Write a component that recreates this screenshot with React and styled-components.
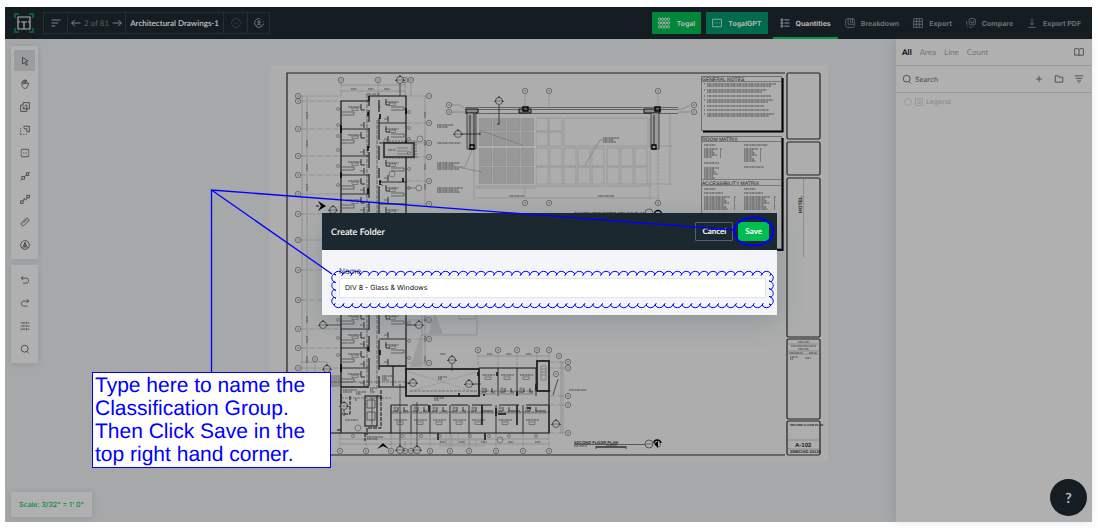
import React from "react";
import styled, { createGlobalStyle } from "styled-components";

/* ---------- icons ---------- */

const ICONS = {
	menu: <path d="M2 4h12M2 8h9M2 12h5" />,
	left: <path d="M15 8H1M6 3L1 8l5 5" />,
	right: <path d="M1 8h14M10 3l5 5-5 5" />,
	check: (
		<>
			<circle cx="8" cy="8" r="7" />
			<path d="M5 8l2 2 4-4" />
		</>
	),
	account: (
		<>
			<path d="M9 1a7 7 0 1 0 6 8" />
			<circle cx="8" cy="6.500" r="2" />
			<path d="M4.500 12c1-3 6-3 7 0M12 2l1 1M14 5l1 1" />
		</>
	),
	pattern: (
		<>
			{[3, 8, 13].map((y) =>
				[2, 6, 10, 14].map((x) => <circle key={`${x}-${y}`} cx={x} cy={y} r="1.600" />)
			)}
		</>
	),
	chat: (
		<>
			<path d="M1 2h14M15 2v12H1V2" />
			<path d="M4 8h1.500M7.500 8H9M11 8h1" />
		</>
	),
	list: (
		<>
			<circle cx="3" cy="3" r="1.700" />
			<circle cx="3" cy="8" r="1.700" />
			<circle cx="3" cy="13" r="1.700" />
			<path d="M7 3h8M7 8h8M7 13h8" />
		</>
	),
	breakdown: (
		<>
			<rect x="1" y="1" width="14" height="14" rx="3" />
			<path d="M5 1v9h10M9 1v6h3V1" />
		</>
	),
	table: <path d="M1 1h14v14H1zM1 5.500h14M1 10h14M5.500 1v14M10 1v14" />,
	compare: (
		<>
			<rect x="5" y="1" width="10" height="10" rx="2" />
			<path d="M8 4v4h4V4M1 5v6M2 14h2M6 15h3M11 14v-1" />
		</>
	),
	download: <path d="M8 1v10M5 8l3 3 3-3M2 15h12" />,
	pointer: <path d="M4 2l9 6-4 1 3 5-2 1-3-5-3 3z" />,
	hand: (
		<>
			<path d="M3 9V5c0-1 2-1 2 0V3c0-1 2-1 2 0V2c0-1 2-1 2 0v1c0-1 2-1 2 0v5l2-1c2 0 1 1 0 3l-2 4c-3 2-8 1-8-5z" />
			<path d="M5 5v4M7 3v5M9 3v5" />
		</>
	),
	duplicate: (
		<>
			<path d="M5 5V1h10v10h-4" />
			<path d="M5 5H1v10h10v-4M11 5v6H5M11 5H8M5 8v3M5 8h3" />
		</>
	),
	cutout: <path d="M6 4V2h9v9h-4V6H6M1 5v2M1 9v2M1 13v2h2M5 15h2M9 15h2" />,
	split: (
		<>
			<path d="M2 6V3l1-1h10l1 1v3M2 10v3l1 1h10l1-1v-3" />
			<path d="M1 8h2M5 8h2M9 8h2M13 8h2" />
		</>
	),
	line: (
		<>
			<rect x="3" y="9" width="4" height="4" />
			<rect x="10" y="3" width="4" height="4" />
			<path d="M7 9l3-2M1 15l2-2M14 3l2-2" />
		</>
	),
	polyline: (
		<>
			<rect x="1" y="11" width="4" height="4" />
			<rect x="11" y="2" width="4" height="4" />
			<path d="M5 11l2-4 2 3 3-4" />
		</>
	),
	ruler: <path d="M2 10l8-8c2-1 5 2 4 4l-8 8c-2 1-5-2-4-4zM5 10l6-6" />,
	auto: (
		<>
			<circle cx="8" cy="8" r="7" />
			<path d="M4 13l4-9 4 9M6 10h4M8 4v9" />
		</>
	),
	undo: <path d="M5 2L2 5l3 3M2 5h8c5 0 5 8 0 8H5" />,
	redo: <path d="M11 2l3 3-3 3M14 5H6c-5 0-5 8 0 8h6" />,
	sliders: <path d="M1 3h7M12 3h3M10 1v4M1 8h2M7 8h8M5 6v4M1 13h7M12 13h3M10 11v4" />,
	search: (
		<>
			<circle cx="7.500" cy="7.500" r="5.500" />
			<path d="M11 12l3 3" />
		</>
	),
	book: <path d="M8 4v10M8 4C6 2 3 2 1 3v10h14V3c-2-1-5-1-7 1z" />,
	plus: <path d="M8 3v10M3 8h10" />,
	folder: <path d="M2 3h5l1 2h6v8H2z" />,
	filter: <path d="M1 3h14M3 7h10M5 11h6M7 14h2" />,
	legend: (
		<>
			<rect x="1" y="1" width="14" height="14" rx="1" />
			<path d="M4 5h1M7 5h5M4 8h1M7 8h5M4 11h1M7 11h5" />
		</>
	),
};

function Icon({ name, size = 10 }) {
	return (
		<Glyph width={size} height={size} viewBox="0 0 16 16" aria-hidden="true">
			{ICONS[name]}
		</Glyph>
	);
}

function Logo() {
	return (
		<svg width="20" height="20" viewBox="0 0 20 20" fill="none" aria-hidden="true">
			<path d="M1 5V1h4M15 1h4v4M19 15v4h-4M5 19H1v-4" stroke="#08753f" strokeWidth="1.500" />
			<path d="M4 4h12v12H4zM4 9h2M14 9h2M7 9h6M10 9v7" stroke="#a9afb2" strokeWidth="1.200" />
		</svg>
	);
}

/* ---------- floor plan ---------- */

const BUBBLES = [
	...[341, 378, 405, 411].map((x) => [x, 80]),
	...[96, 101, 129, 156, 175, 194, 214, 240, 270, 300, 329, 348, 368].map((y) => [298, y]),
	...[96, 123, 143, 157, 181, 204, 320, 339, 363].map((y) => [429, y]),
	...[478, 498, 517, 537, 549].map((x) => [x, 350]),
	...[340, 366, 391, 405, 411, 430, 450, 469, 496, 523, 549].map((x) => [x, 451]),
	...[362, 368, 396, 405, 433].map((y) => [568, y]),
	...[525, 549, 658].flatMap((x) => [[x, 91], [x, 203]]),
	[449, 105], [449, 112], [694, 105], [694, 112], [315, 359], [559, 356], [556, 374],
];

const TAGS = [
	[400, 80], [499, 101], [458, 134], [323, 325], [419, 325], [452, 360], [413, 383],
	[469, 384], [400, 450], [417, 450], [327, 369], [344, 406], [556, 424], [333, 210],
];

// x, y, width, height, bathroom on the right
const ROOMS = [
	[341, 101, 28, 28, 1], [341, 129, 28, 27, 1], [341, 156, 28, 19, 1], [341, 175, 28, 19, 1],
	[341, 194, 28, 20, 1], [379, 96, 27, 27, 0], [379, 123, 27, 20, 0], [379, 157, 27, 25, 0],
	[379, 182, 27, 22, 0], [379, 204, 27, 20, 0], [341, 310, 28, 19, 1], [341, 329, 28, 19, 1],
	[341, 348, 28, 20, 1], [341, 368, 28, 19, 1], [379, 310, 27, 29, 0], [379, 339, 27, 27, 0],
];

const UPPER_WING = [479, 498, 517];
const LOWER_WING = [
	[391, 20], [411, 19], [430, 20], [450, 19], [469, 27], [496, 27], [523, 26],
];

function Scribble({ x, y, w, rows = 1, gap = 2 }) {
	return Array.from({ length: rows }, (_, i) => (
		<path
			key={i}
			d={`M${x} ${y + i * gap}h${Math.max(w - ((i * 5) % 7), 1)}`}
			stroke="#333"
			strokeWidth=".8"
			strokeDasharray="1.500 .4 2.500 .4 .8 .4"
		/>
	));
}

function Room({ x, y, w, h, flip }) {
	const bath = flip ? x + w - 9 : x + 5;
	return (
		<g>
			<path d={`M${x} ${y + h}h${w}`} stroke="#222" strokeWidth=".9" />
			<path
				d={`M${bath + 4} ${y + h - 7}v6M${flip ? x + 20 : x + 7} ${y + 3}v6h4`}
				stroke="#222"
				strokeWidth=".9"
			/>
			<path
				d={`M${flip ? x : x + 12} ${y + 11}h13v3h-13M${bath} ${y + h - 4}h4`}
				stroke="#333"
				strokeWidth=".6"
			/>
			<Scribble x={x + w / 2 - 7} y={y + 6} w={13} />
			<rect x={x + w / 2 - 3} y={y + 7} width="6" height="2.500" stroke="#444" strokeWidth=".5" />
		</g>
	);
}

function WingRoom({ x, y, w, h, top }) {
	const wy = top ? y + 2 : y + h - 8;
	return (
		<g>
			<path d={`M${x + w} ${y}v${h}`} stroke="#222" strokeWidth=".9" />
			<path
				d={`M${x + 2} ${wy + 4}h5M${x + 12} ${wy + 4}h${w - 15}M${x + 7} ${wy}v4M${x + 13} ${wy}v4`}
				stroke="#222"
				strokeWidth=".8"
			/>
			<path d={`M${x + 3} ${wy}h2v2h-2zM${x + 1} ${wy + 6}h${w - 3}`} stroke="#444" strokeWidth=".5" />
			<Scribble x={x + 3} y={y + (top ? 15 : 7)} w={13} />
			<rect x={x + 6} y={y + (top ? 17 : 9)} width="6" height="2.500" stroke="#444" strokeWidth=".5" />
		</g>
	);
}

function Tag({ x, y }) {
	return (
		<g>
			<path d={`M${x - 5} ${y + 1}l5-6 5 6z`} fill="#111" />
			<circle cx={x} cy={y} r="3.500" fill="#adadad" stroke="#222" strokeWidth=".6" />
			<path d={`M${x - 3} ${y}h6`} stroke="#333" strokeWidth=".5" />
		</g>
	);
}

function SectionView() {
	const light = [];
	for (const [y, h] of [[118, 13], [132, 14]]) light.push([536, y, 12, h], [549, y, 13, h]);
	for (const [y, h] of [[148, 18], [167, 17]]) {
		[536, 550, 564, 578, 592, 607, 621, 635].forEach((x) => light.push([x, y, 12, h]));
	}
	return (
		<g>
			<path d="M478 117h58v68h-58z" fill="#b8b8b8" />
			{[479, 493, 507, 521].flatMap((x) =>
				[[118, 13], [132, 14], [148, 18], [167, 17]].map(([y, h]) => (
					<rect key={`${x}-${y}`} x={x} y={y} width="13" height={h} fill="#989898" stroke="#8c8c8c" strokeWidth=".5" />
				))
			)}
			<g stroke="#8c8c8c" strokeWidth=".6">
				{light.map(([x, y, w, h]) => (
					<rect key={`${x}-${y}`} x={x} y={y} width={w} height={h} />
				))}
				<rect x="564" y="118" width="84" height="28" />
				<path d="M476 186h174M476 188h60M474 150v50M477 198h182M650 118v82M648 146h24M645 184h26M670 113v72" />
			</g>
			<path d="M465 107.500h213M465 109.500h213M465 113.500h213" stroke="#444" strokeWidth=".7" />
			<path d="M466 109h12v4h-12zM519 109h12v4h-12zM644 109h16v4h-16z" fill="#888" stroke="#111" strokeWidth="1" />
			<path d="M467 113h9v36h-9zM651 113h8v36h-8z" fill="#999" stroke="#333" strokeWidth=".8" />
			<path d="M470 115v30M474 113v34M654 115v30" stroke="#222" strokeWidth=".9" />
			<path d="M470 145h4v4h-4zM652 145h4v4h-4zM523 107h5v4h-5zM655 107h5v4h-5z" stroke="#000" strokeWidth="1.300" />
			<path d="M525 95v13M549 95v14M658 95v14M525 187v12M658 150v50" stroke="#777" strokeWidth=".5" strokeDasharray="3 1" />
			<path d="M499 105v19M462 134h18M480 132v3M497 124h3" stroke="#222" strokeWidth=".8" />
			<path d="M452 105h8l5 4M452 112h13M678 109h5l7-4M678 112h12M479 130l43 15M457 167h8l7-17M457 167l25 5M585 165l15-25h3" stroke="#666" strokeWidth=".5" />
			<Scribble x={437} y={125} w={16} rows={2} />
			<Scribble x={437} y={143} w={24} />
			<Scribble x={437} y={163} w={23} rows={4} />
			<Scribble x={437} y={188} w={26} rows={3} />
			<Scribble x={603} y={138} w={16} rows={3} />
			<Scribble x={509} y={196} w={15} />
			<Scribble x={598} y={196} w={16} />
			<SheetText x="574" y="215" $size={4} $bold>CANOPY REFLECTED CEILING PLAN</SheetText>
			<circle cx="649" cy="213" r="4" stroke="#222" strokeWidth=".6" />
			<circle cx="658" cy="214" r="3.500" stroke="#000" strokeWidth="1.500" />
		</g>
	);
}

function SheetNotes() {
	return (
		<g>
			<path d="M703 131.500h80.500M782.500 78v54" stroke="#000" strokeWidth="2.200" />
			<path d="M703 250h80.500M782.500 138v113" stroke="#000" strokeWidth="2.200" />
			<path d="M701.500 76.500h80v54h-80zM701.500 136.500h80v112h-80z" stroke="#555" strokeWidth=".7" />
			<path d="M702 81.500h79M702 141.500h79M702 179.500h79M702 185.500h79" stroke="#555" strokeWidth=".6" />
			<SheetText x="702" y="81" $size={5}>GENERAL NOTES</SheetText>
			<SheetText x="702" y="141" $size={5}>ROOM MATRIX</SheetText>
			<SheetText x="702" y="185" $size={5}>ACCESSIBILITY MATRIX</SheetText>
			{[[84, 69, 2], [90, 60, 2], [96, 64, 1], [100, 66, 2], [106, 57, 1], [110, 62, 1], [114, 67, 2]].map(([y, w, rows]) => (
				<g key={y}>
					<Scribble x={704} y={y} w={1} />
					<Scribble x={707} y={y} w={w} rows={rows} />
				</g>
			))}
			<Scribble x={704} y={145} w={12} />
			<Scribble x={744} y={145} w={24} />
			<Scribble x={704} y={149} w={14} rows={5} />
			<Scribble x={744} y={149} w={14} rows={7} />
			<Scribble x={720} y={149} w={2} rows={5} />
			<Scribble x={760} y={149} w={2} rows={7} />
			<Scribble x={704} y={163} w={15} />
			<Scribble x={744} y={167} w={20} />
			<Scribble x={704} y={168} w={15} rows={6} />
			<Scribble x={704} y={189} w={12} />
			<Scribble x={744} y={189} w={12} />
			{[704, 744].map((x) => (
				<g key={x}>
					<Scribble x={x} y={193} w={19} />
					<Scribble x={x} y={197} w={26} rows={7} />
					<Scribble x={x + 30} y={197} w={2} rows={7} />
				</g>
			))}
		</g>
	);
}

function TitleBlock() {
	return (
		<g>
			<g stroke="#222" strokeWidth="1.200">
				<rect x="787" y="73" width="33" height="66" rx="1.500" />
				<rect x="787" y="142" width="33" height="33" rx="1.500" />
				<rect x="787" y="178" width="33" height="159" rx="1.500" />
				<rect x="787" y="339" width="33" height="80" rx="1.500" />
				<rect x="787" y="421" width="33" height="34" rx="1.500" />
			</g>
			<path d="M803.500 179v78M788 344h32M788 351h32M788 354h32M788 440h32M788 449h32" stroke="#777" strokeWidth=".6" />
			<SheetText transform="translate(802 213) rotate(-90)" $size={5} $bold>HOTEL</SheetText>
			<Scribble x={798} y={342} w={12} />
			<Scribble x={791} y={346} w={25} />
			<Scribble x={798} y={349} w={11} />
			<Scribble x={789} y={353} w={14} />
			<Scribble x={809} y={353} w={8} />
			<Scribble x={790} y={357} w={8} rows={2} />
			<Scribble x={805} y={358} w={6} />
			<SheetText x="790" y="426" $size={3} $bold>SECOND FLOOR PLAN</SheetText>
			<SheetText x="795" y="447" $size={6} $bold>A-102</SheetText>
			<SheetText x="790" y="453" $size={4} $bold>2DMCIAD-22135</SheetText>
		</g>
	);
}

function FloorPlan() {
	return (
		<Sheet viewBox="270 65 558 397" fill="none" role="img" aria-label="Second floor plan">
			<path d="M785 73H287v382h498" stroke="#222" strokeWidth="1.200" />

			{/* grid and dimension lines */}
			<g stroke="#777" strokeWidth=".5" strokeDasharray="5 1 1 1">
				{[96, 101, 129, 156, 175, 194, 214, 240, 270, 300, 329, 348, 368].map((y) => (
					<path key={y} d={`M301 ${y}h40`} />
				))}
				{[96, 123, 143, 157, 181, 204, 320, 339, 363].map((y) => (
					<path key={y} d={`M407 ${y}h19`} />
				))}
				{[341, 378, 405].map((x) => (
					<path key={x} d={`M${x} 83v16`} />
				))}
				{[478, 498, 517, 537, 549].map((x) => (
					<path key={x} d={`M${x} 353v15`} />
				))}
				{[340, 366, 391, 405, 411, 430, 450, 469, 496, 523, 549].map((x) => (
					<path key={x} d={`M${x} 433v15`} />
				))}
				{[362, 368, 396, 405, 433].map((y) => (
					<path key={y} d={`M550 ${y}h15`} />
				))}
			</g>
			<g stroke="#777" strokeWidth=".5">
				<path d="M307 96v276M302 96v276M341 85h65M341 91h65M425 96v110M425 318v48M478 356h71M341 444h208M300 362h27v13M563 361v72M561 361v72M340 439h209" />
				<path d="M315 362v10M411 83v13M422 310v56M477 310v25h-56M459 311h16v8h-16z" />
			</g>
			<path d="M410 367l11-33v33zM428 334l7-22 8 22z" fill="#9c9c9c" />
			<path d="M327 375h14v12h-14z" fill="#8c8c8c" />

			{/* residential tower */}
			<path d="M341 433V101h28v-5h37v291M341 387h28" stroke="#111" strokeWidth="1.200" />
			<path
				d="M369 96v10M369 110v12M369 128v20M369 152v16M369 174v24M369 202v10M379 100v12M379 118v22M379 146v14M379 168v10M379 186v28M369 310v20M369 336v16M369 358v28M379 310v24M379 340v30M379 376v12"
				stroke="#111"
				strokeWidth="1.100"
			/>
			<path d="M367 94h13M367 94v295M377 120v267" stroke="#333" strokeWidth=".6" strokeDasharray="4 1" />
			{ROOMS.map(([x, y, w, h, flip]) => (
				<Room key={`${x}-${y}`} x={x} y={y} w={w} h={h} flip={flip} />
			))}
			<path d="M341 125v8M406 141v4M368 112v4M368 146v5M368 188v6M368 347v4M380 114v5M380 180v5M380 350v5M341 172v6M341 364v8M403 178v4M406 108v6" stroke="#000" strokeWidth="1.500" />
			<path d="M367 112h1M379 107h2M380 183l3 3M367 346h3M356 398v3M429 406v3M517 393v3" stroke="#933" strokeWidth="1" />
			<rect x="384" y="143" width="30" height="14" fill="#aaa" stroke="#222" strokeWidth="1.500" />
			<path d="M397 148h11M397 151h11M397 154h11M412 144v12" stroke="#666" strokeWidth=".7" />
			<Scribble x={388} y={150} w={8} />
			<path d="M383 141h33v17h-33" stroke="#333" strokeWidth=".6" strokeDasharray="2 1" />

			{/* lobby and long wing */}
			<rect x="406" y="369" width="73" height="27" stroke="#222" strokeWidth="1.800" />
			<path d="M409 372l67 20M409 392l67-20" stroke="#888" strokeWidth=".6" strokeDasharray="3 1" />
			<Scribble x={438} y={377} w={9} rows={2} />
			<path d="M410 391h141M330 382h75M341 398h50M391 412h158" stroke="#333" strokeWidth=".5" strokeDasharray="3 1" />
			<path d="M391 405h17M412 405h16M432 405h15M451 405h17M472 405h20M499 405h20M526 405h23" stroke="#222" strokeWidth="1" />
			{UPPER_WING.map((x) => (
				<WingRoom key={x} x={x} y={368} w={19} h={28} />
			))}
			{LOWER_WING.map(([x, w]) => (
				<WingRoom key={x} x={x} y={405} w={w} h={28} top />
			))}
			<path d="M391 405v28h158V391M330 433h61M479 368h58M379 366h27M393 366v20M379 387h27" stroke="#111" strokeWidth="1.100" />
			<path d="M429 405v7M459 396v-3M478 372v4M484 396v-2M497 372v4M517 396v-5M536 384v6M482 405v20M496 408v8M517 405v20M498 414h8M527 408h4" stroke="#111" strokeWidth="1.500" />
			<rect x="537" y="361" width="12" height="30" stroke="#222" strokeWidth="1.800" />
			<path d="M541 366h5v14h-5zM541 369h5M541 372h5M541 375h5" stroke="#555" strokeWidth=".5" />
			<rect x="365" y="396" width="12" height="30" stroke="#222" strokeWidth="1.200" />
			<path d="M367 400h8v8h-8zM367 412h8v8h-8zM372 397v28" stroke="#333" strokeWidth=".7" />
			<path d="M365 433v8M377 396h4v32h-14v7M381 390v9M341 394v12M350 396v18h-8M337 430h4" stroke="#111" strokeWidth="1" strokeDasharray="4 1" />
			<Scribble x={345} y={420} w={13} />
			<path d="M438 433v7M485 433v7" stroke="#333" strokeWidth="2" />
			<path d="M440 440h44v6h-44zM446 434v12M452 434v12M458 434v12M464 440v6M470 440v6M476 440v6" stroke="#888" strokeWidth=".5" />
			<Scribble x={343} y={390} w={14} rows={2} />
			<Scribble x={356} y={392} w={10} rows={2} />
			<Scribble x={370} y={388} w={8} rows={3} />
			<Scribble x={382} y={376} w={10} rows={3} />
			<Scribble x={367} y={437} w={16} rows={2} />
			<Scribble x={434} y={398} w={10} rows={2} />
			<Scribble x={569} y={390} w={18} />
			<path d="M323 325h18M406 325h13M452 363v8M413 383h-8M469 384h12M400 384v62M417 402v44M344 406v10M400 84v12M553 395l5-16" stroke="#222" strokeWidth=".7" />

			{/* bubbles, tags and dimensions */}
			{BUBBLES.map(([x, y]) => (
				<g key={`${x}-${y}`} stroke="#444" strokeWidth=".6">
					<circle cx={x} cy={y} r="2.700" />
					<path d={`M${x - 1} ${y}h2`} />
				</g>
			))}
			<g stroke="#444" strokeWidth=".5">
				{[109, 125, 136, 150, 166, 185, 320, 338, 355].flatMap((y) => [
					<circle key={`l${y}`} cx="338" cy={y} r="1.500" />,
					<circle key={`r${y}`} cx="409" cy={y + 3} r="1.500" />,
				])}
				{[353, 402, 421, 440, 470, 489, 509, 536].map((x) => (
					<circle key={x} cx={x} cy="436" r="1.500" />
				))}
				<circle cx="420" cy="139" r="3" />
				<circle cx="392" cy="174" r="3" />
				<circle cx="419" cy="188" r="3" />
				<circle cx="358" cy="428" r="3" />
				<circle cx="500" cy="440" r="3" />
				<path d="M406 188h10" />
			</g>
			{[112, 140, 164, 184, 316, 336, 356].map((y) => (
				<path key={y} d={`M307 ${y}v7M425 ${y}v6`} stroke="#444" strokeWidth="1" strokeDasharray="1.500 .5" />
			))}
			{[351, 368, 384].map((x) => (
				<Scribble key={x} x={x} y={89} w={6} />
			))}
			{[440, 487, 506, 526].map((x) => (
				<Scribble key={x} x={x} y={354} w={6} />
			))}
			{[440, 459, 481, 508, 535].map((x) => (
				<Scribble key={x} x={x} y={442} w={6} />
			))}
			{TAGS.map(([x, y]) => (
				<Tag key={`${x}-${y}`} x={x} y={y} />
			))}
			<path d="M318 201l8 5-8 5 3-5zM377 449l6-6 6 6-6-3z" fill="#000" />
			<path d="M319 206h-3" stroke="#111" />

			<SectionView />
			<SheetNotes />
			<TitleBlock />

			<SheetText x="574" y="444" $size={4} $bold>SECOND FLOOR PLAN</SheetText>
			<path d="M574 444.500h71" stroke="#333" strokeWidth=".7" />
			<path d="M596 447h30" stroke="#111" strokeWidth="1.200" />
			<path d="M596 446v3M606 445h11M626 446v3" stroke="#333" strokeWidth=".8" />
			<Scribble x={574} y={446} w={13} />
			<circle cx="649" cy="444" r="4" stroke="#333" strokeWidth=".7" />
			<path d="M646 444h6" stroke="#333" strokeWidth=".6" />
			<path d="M658 441l-4 3 4 4z" fill="#000" />
			<path d="M654 443c0-4 6-4 7 0" stroke="#000" strokeWidth="1.500" />
			<path d="M658 447c3 0 3-3 1-4" stroke="#333" strokeWidth=".6" />
		</Sheet>
	);
}

/* ---------- markup over the screen ---------- */

function cloudPath(x, y, w, h, cols, rows) {
	const sx = w / cols;
	const sy = h / rows;
	let d = `M${x} ${y}`;
	for (let i = 0; i < cols; i++) d += `a5 5 0 0 1 ${sx} 0l-1 1.500l1 -1.500`;
	for (let i = 0; i < rows; i++) d += `a4.500 4.500 0 0 1 0 ${sy}l-2 -1l2 1`;
	for (let i = 0; i < cols; i++) d += `a5 5 0 0 1 ${-sx} 0l1 -1.500l-1 1.500`;
	for (let i = 0; i < rows; i++) d += `a4.500 4.500 0 0 1 0 ${-sy}l2 1l-2 -1`;
	return d;
}

function Markup() {
	return (
		<MarkupLayer viewBox="0 0 1098 528" fill="none" stroke="#0000ff" aria-hidden="true">
			<path d="M211.500 373V190L332 274M211.500 190L734 230" strokeWidth="1.300" />
			<ellipse cx="753.500" cy="231.500" rx="19.500" ry="14" strokeWidth="2" />
			<path d={cloudPath(334, 274, 437, 31, 49, 4)} strokeWidth="1" />
		</MarkupLayer>
	);
}

/* ---------- screen ---------- */

const TOOLS = [
	["pointer", "Select"],
	["hand", "Pan"],
	["duplicate", "Duplicate"],
	["cutout", "Cut out"],
	["split", "Split"],
	["line", "Line"],
	["polyline", "Polyline"],
	["ruler", "Measure"],
	["auto", "Annotate"],
];

const ACTIONS = [
	["undo", "Undo"],
	["redo", "Redo"],
	["sliders", "Adjust"],
	["search", "Zoom"],
];

const TABS = [
	["list", "Quantities"],
	["breakdown", "Breakdown"],
	["table", "Export"],
	["compare", "Compare"],
	["download", "Export PDF"],
];

export default function App() {
	return (
		<Page>
			<GlobalStyle />
			<Screen>
				<Header>
					<Logo />
					<SheetNav>
						<NavButton aria-label="Menu" $width={24}>
							<Icon name="menu" size={12} />
						</NavButton>
						<Pager>
							<PageButton aria-label="Previous">
								<Icon name="left" />
							</PageButton>
							2 of 81
							<PageButton aria-label="Next">
								<Icon name="right" />
							</PageButton>
						</Pager>
						<DrawingName>Architectural Drawings-1</DrawingName>
						<NavButton aria-label="Approve" $width={24} $dim>
							<Icon name="check" />
						</NavButton>
						<NavButton aria-label="Account" $width={21}>
							<Icon name="account" />
						</NavButton>
					</SheetNav>
					<TogalButton>
						<Icon name="pattern" size={12} />
						Togal
					</TogalButton>
					<TogalButton $gpt>
						<Icon name="chat" />
						TogalGPT
					</TogalButton>
					<TabBar>
						{TABS.map(([icon, label], i) => (
							<Tab key={label} $active={i === 0}>
								<Icon name={icon} />
								{label}
							</Tab>
						))}
					</TabBar>
				</Header>

				<Main>
					<Rail>
						<ToolGroup>
							{TOOLS.map(([icon, label], i) => (
								<ToolButton key={label} aria-label={label} $active={i === 0}>
									<Icon name={icon} />
								</ToolButton>
							))}
						</ToolGroup>
						<ToolGroup>
							{ACTIONS.map(([icon, label]) => (
								<ToolButton key={label} aria-label={label}>
									<Icon name={icon} />
								</ToolButton>
							))}
						</ToolGroup>
						<ScaleButton>Scale: 3/32" = 1' 0"</ScaleButton>
					</Rail>

					<Canvas>
						<FloorPlan />
					</Canvas>

					<Side>
						<SideRow>
							<Filter $active>All</Filter>
							<Filter>Area</Filter>
							<Filter>Line</Filter>
							<Filter>Count</Filter>
							<SideIcon aria-label="Library" $last>
								<Icon name="book" />
							</SideIcon>
						</SideRow>
						<SideRow>
							<Icon name="search" />
							<SearchInput aria-label="Search" placeholder="Search" />
							<SideIcon aria-label="Add">
								<Icon name="plus" />
							</SideIcon>
							<SideIcon aria-label="New folder">
								<Icon name="folder" />
							</SideIcon>
							<SideIcon aria-label="Filter">
								<Icon name="filter" />
							</SideIcon>
						</SideRow>
						<Legend>
							<input type="radio" name="legend" />
							<Icon name="legend" size={8} />
							Legend
						</Legend>
					</Side>
				</Main>

				<Backdrop>
					<Dialog role="dialog" aria-labelledby="dialog-title">
						<DialogHeader>
							<DialogTitle id="dialog-title">Create Folder</DialogTitle>
							<DialogButton>Cancel</DialogButton>
							<DialogButton $primary>Save</DialogButton>
						</DialogHeader>
						<DialogBody>
							<label htmlFor="folder-name">Name</label>
							<NameInput id="folder-name" defaultValue="DIV 8 - Glass &amp; Windows" />
						</DialogBody>
					</Dialog>
				</Backdrop>

				<HelpButton aria-label="Help">?</HelpButton>
			</Screen>

			<Markup />
			<Callout>
				Type here to name the Classification Group. Then Click Save in the top right hand corner.
			</Callout>
		</Page>
	);
}

const GlobalStyle = createGlobalStyle`
	* {
		box-sizing: border-box;
	}

	body {
		margin: 0;
		background: #ffffff;
		font-family: Inter, "Liberation Sans", sans-serif;
		font-size: 8px;
		text-rendering: geometricPrecision;
	}

	button,
	input {
		font: inherit;
		color: inherit;
		margin: 0;
		padding: 0;
		border: 0;
		background: none;
		text-rendering: inherit;
	}

	button {
		cursor: pointer;
	}
`;

const Glyph = styled.svg`
	flex: none;
	fill: none;
	stroke: currentColor;
	stroke-width: 1.2;
`;

const Page = styled.div`
	position: relative;
	height: 100vh;
	padding: 7px 6px 6px 5px;
`;

const Screen = styled.div`
	position: relative;
	display: flex;
	flex-direction: column;
	height: 100%;
	background: #a6a8aa;
`;

const Header = styled.header`
	display: flex;
	align-items: center;
	flex: none;
	height: 32px;
	padding: 0 4px 0 9px;
	background: #151d22;
	color: #a9adb0;
`;

const SheetNav = styled.nav`
	display: flex;
	height: 22px;
	margin: 0 auto 0 9px;
	border: 1px solid #262e33;
`;

const NavButton = styled.button`
	display: grid;
	place-items: center;
	width: ${(p) => p.$width}px;
	color: ${(p) => (p.$dim ? "#40484d" : "#8b9194")};
	border-right: 1px solid #262e33;

	&:last-child {
		border-right: 0;
	}
`;

const Pager = styled.div`
	display: flex;
	align-items: center;
	gap: 3px;
	padding: 0 3px;
	color: #555d61;
	font-family: Lato, sans-serif;
	border-right: 1px solid #262e33;
`;

const PageButton = styled.button`
	display: flex;
	color: #a0a5a8;
`;

const DrawingName = styled.div`
	display: flex;
	align-items: center;
	padding: 0 4px;
	color: #c0c3c5;
	font-family: Lato, sans-serif;
	font-weight: 600;
	border-right: 1px solid #262e33;
`;

const TogalButton = styled.button`
	display: flex;
	align-items: center;
	gap: 6px;
	height: 22px;
	margin-right: 5px;
	padding: 0 6px;
	border-radius: 1px;
	background: ${(p) => (p.$gpt ? "#006b4d" : "#00873a")};
	color: #b0b8b2;
	font-size: 7px;
	font-weight: 700;
`;

const TabBar = styled.nav`
	display: flex;
	align-self: stretch;
`;

const Tab = styled.button`
	display: flex;
	align-items: center;
	gap: 6px;
	padding: 0 7px;
	border-top: 2px solid transparent;
	border-bottom: 2px solid ${(p) => (p.$active ? "#009a42" : "transparent")};
	color: ${(p) => (p.$active ? "#b8b8b8" : "#6c7276")};
	font-size: 7px;
	font-weight: 700;
`;

const Main = styled.main`
	display: flex;
	flex: 1;
	min-height: 0;
`;

const Rail = styled.aside`
	display: flex;
	flex-direction: column;
	align-items: flex-start;
	gap: 6px;
	padding: 7px 6px 5px;
`;

const ToolGroup = styled.div`
	display: flex;
	flex-direction: column;
	gap: 2px;
	padding: 4px 3px;
	background: #b0b0b0;
	box-shadow: 0 1px 6px rgba(60, 80, 90, 0.2);
`;

const ToolButton = styled.button`
	display: grid;
	place-items: center;
	width: 21px;
	height: 21px;
	color: #2c3439;
	background: ${(p) => (p.$active ? "#9b9c9e" : "none")};
`;

const ScaleButton = styled.button`
	height: 25px;
	margin-top: auto;
	padding: 0 8px;
	background: #b0b0b0;
	color: #008a40;
	font-size: 7px;
	font-weight: 500;
	white-space: nowrap;
	box-shadow: 0 1px 6px rgba(60, 80, 90, 0.2);
`;

const Canvas = styled.section`
	display: flex;
	justify-content: flex-end;
	align-items: flex-start;
	flex: 1;
	min-width: 0;
	padding: 26px 68px 0 0;
`;

const Sheet = styled.svg`
	width: 100%;
	max-width: 558px;
	background: #adadad;
`;

const SheetText = styled.text`
	fill: #222222;
	font-family: "Liberation Sans", sans-serif;
	font-size: ${(p) => p.$size}px;
	font-weight: ${(p) => (p.$bold ? 700 : 400)};
`;

const Side = styled.aside`
	flex: none;
	width: 196px;
	background: #b0b0b0;
	color: #30363a;
	box-shadow: -2px 0 10px rgba(60, 80, 90, 0.15);
`;

const SideRow = styled.div`
	display: flex;
	align-items: center;
	gap: 8px;
	height: 27px;
	padding: 0 8px 0 6px;
	border-bottom: 1px solid #9b9c9d;
`;

const Filter = styled.button`
	color: ${(p) => (p.$active ? "#111111" : "#71767a")};
	font-family: Lato, sans-serif;
	font-weight: ${(p) => (p.$active ? 900 : 400)};
`;

const SideIcon = styled.button`
	display: flex;
	margin-left: ${(p) => (p.$last ? "auto" : "2px")};
`;

const SearchInput = styled.input`
	flex: 1;
	min-width: 0;
	margin-left: -5px;
	font-size: 7px;
	outline: none;

	&::placeholder {
		color: #464b4f;
		opacity: 1;
	}
`;

const Legend = styled.label`
	display: flex;
	align-items: center;
	gap: 3px;
	padding: 4px 8px;
	color: #85888a;
	font-size: 7px;

	input {
		appearance: none;
		width: 8px;
		height: 8px;
		border: 1px solid #999b9d;
		border-radius: 50%;
	}
`;

const Backdrop = styled.div`
	position: absolute;
	inset: 0;
	display: grid;
	place-items: center;
	padding: 0 0 2px 2px;
`;

const Dialog = styled.section`
	width: 455px;
	max-width: 100%;
	background: #f3f5f8;
	box-shadow: 0 6px 24px rgba(70, 100, 105, 0.3);
`;

const DialogHeader = styled.header`
	display: flex;
	align-items: center;
	gap: 5px;
	height: 37px;
	padding: 0 8px 0 9px;
	background: #1c282f;
	color: #ffffff;
`;

const DialogTitle = styled.h1`
	margin: 0 auto 0 0;
	font-family: Lato, sans-serif;
	font-size: 9px;
	font-weight: 600;
`;

const DialogButton = styled.button`
	height: 19px;
	padding: 0 6px;
	border: 1px solid ${(p) => (p.$primary ? "#00bd52" : "#566066")};
	border-radius: 1px;
	background: ${(p) => (p.$primary ? "#00bd52" : "none")};
	font-family: Lato, sans-serif;
	font-weight: 700;
`;

const DialogBody = styled.div`
	display: flex;
	flex-direction: column;
	gap: 2px;
	padding: 16px 11px 17px 17px;
	color: #414b52;
	line-height: 10px;
`;

const NameInput = styled.input`
	height: 20px;
	padding: 0 5px;
	border: 1px solid #e2e5e8;
	background: #ffffff;
	color: #111111;
	font-size: 7px;
`;

const HelpButton = styled.button`
	position: absolute;
	right: 5px;
	bottom: 6px;
	width: 37px;
	height: 37px;
	border-radius: 50%;
	background: #151d22;
	color: #b0b4b6;
	font-family: Lato, sans-serif;
	font-size: 14px;
	font-weight: 900;
`;

const MarkupLayer = styled.svg`
	position: absolute;
	inset: 0;
	width: 100%;
	height: 100%;
	pointer-events: none;
`;

const Callout = styled.div`
	position: absolute;
	left: 92px;
	top: 372px;
	width: 239px;
	padding: 1px 2px;
	border: 1px solid #0000ff;
	background: #ffffff;
	color: #0000ff;
	font-family: "Liberation Sans", sans-serif;
	font-size: 21px;
	line-height: 23px;
`;
